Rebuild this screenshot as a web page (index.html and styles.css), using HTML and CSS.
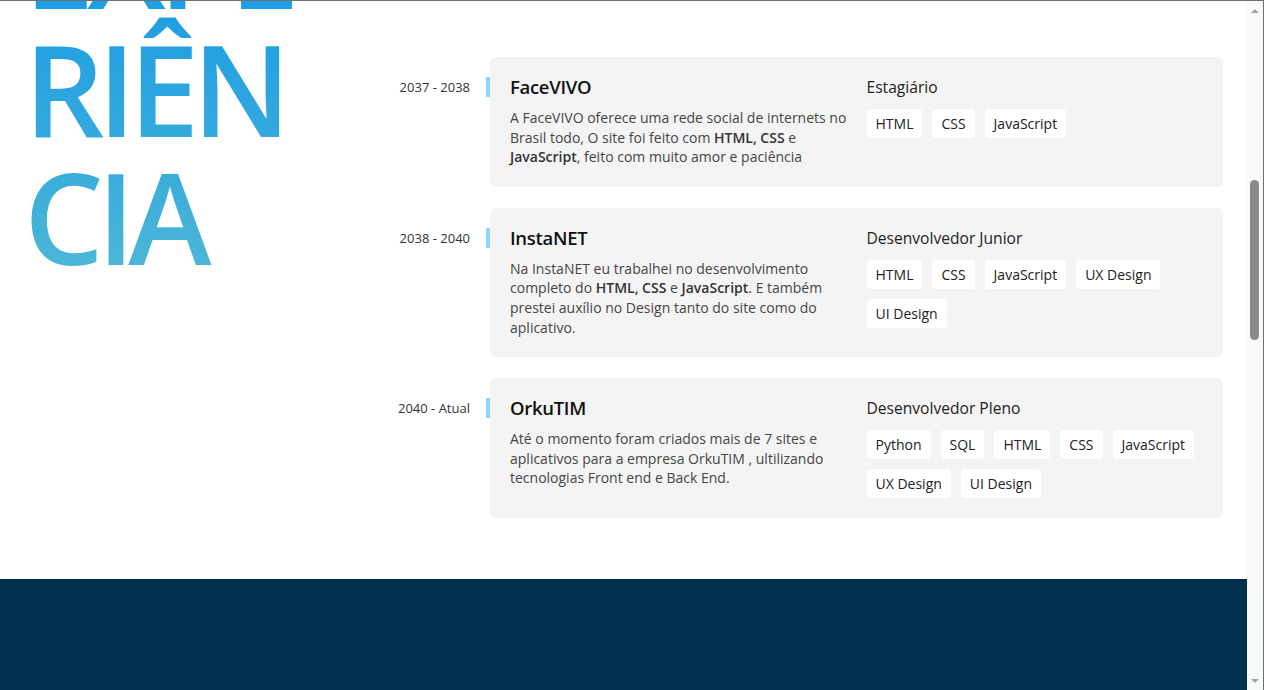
FILE: index.html
```html
<!DOCTYPE html>
<html lang="pt-BR">
<head>
<meta charset="utf-8">
<title>Experiência</title>
<link rel="stylesheet" href="styles.css">
</head>
<body>
<div class="viewport">
  <main class="page">
    <section class="experience">
      <h2 class="exp-title"><span>EXPE</span><span>RIÊN</span><span>CIA</span></h2>
      <div class="timeline">
        <div class="item">
          <div class="date">2037 - 2038</div>
          <div class="card">
            <div class="info">
              <h3 class="company">FaceVIVO</h3>
              <p class="desc">A FaceVIVO oferece uma rede social de internets no Brasil todo, O site foi feito com <b>HTML, CSS</b> e <b>JavaScript</b>, feito com muito amor e paciência</p>
            </div>
            <div class="role-box">
              <div class="role">Estagiário</div>
              <ul class="tags"><li>HTML</li><li>CSS</li><li>JavaScript</li></ul>
            </div>
          </div>
        </div>
        <div class="item">
          <div class="date">2038 - 2040</div>
          <div class="card">
            <div class="info">
              <h3 class="company">InstaNET</h3>
              <p class="desc">Na InstaNET eu trabalhei no desenvolvimento completo do <b>HTML, CSS</b> e <b>JavaScript</b>. E também prestei auxílio no Design tanto do site como do aplicativo.</p>
            </div>
            <div class="role-box">
              <div class="role">Desenvolvedor Junior</div>
              <ul class="tags"><li>HTML</li><li>CSS</li><li>JavaScript</li><li>UX Design</li><li>UI Design</li></ul>
            </div>
          </div>
        </div>
        <div class="item">
          <div class="date">2040 - Atual</div>
          <div class="card">
            <div class="info">
              <h3 class="company">OrkuTIM</h3>
              <p class="desc">Até o momento foram criados mais de 7 sites e aplicativos para a empresa OrkuTIM , ultilizando tecnologias Front end e Back End.</p>
            </div>
            <div class="role-box">
              <div class="role">Desenvolvedor Pleno</div>
              <ul class="tags"><li>Python</li><li>SQL</li><li>HTML</li><li>CSS</li><li>JavaScript</li><li>UX Design</li><li>UI Design</li></ul>
            </div>
          </div>
        </div>
      </div>
    </section>
    <footer class="footer"></footer>
  </main>
  <div class="scrollbar" aria-hidden="true">
    <div class="sb-btn">
      <svg width="16" height="17" viewBox="0 0 16 17"><path d="M4 12 L8 8 L12 12 Z" fill="#a3a3a3"/></svg>
    </div>
    <div class="sb-track"><div class="sb-thumb"></div></div>
    <div class="sb-btn">
      <svg width="16" height="17" viewBox="0 0 16 17"><path d="M4 6 L8 10 L12 6 Z" fill="#a3a3a3"/></svg>
    </div>
  </div>
</div>
</body>
</html>
```
FILE: styles.css
```css
* { box-sizing: border-box; }
html, body { margin: 0; padding: 0; }
body {
  font-family: "Open Sans", "Noto Sans", sans-serif;
  color: #222;
  background: #fff;
  overflow: hidden;
}
.viewport {
  display: flex;
  height: 690px;
  border-top: 1px solid #6f6f6f;
}
.page {
  flex: 1;
  min-width: 0;
  display: flex;
  flex-direction: column;
  overflow: hidden;
}

/* browser scrollbar as seen in the capture */
.scrollbar {
  flex: 0 0 17px;
  display: flex;
  flex-direction: column;
  background: #f9f9f9;
  border-right: 1px solid #6f6f6f;
}
.sb-btn { height: 17px; flex: 0 0 17px; }
.sb-btn svg { display: block; }
.sb-track { flex: 1; padding: 162px 4px 0 3px; }
.sb-thumb {
  height: 160px;
  background: #8a8a8a;
  border-radius: 5px;
}

.experience {
  display: grid;
  grid-template-columns: 366px 1fr;
  padding: 0 24px 61px;
  align-items: start;
}
.exp-title {
  margin: -105px 0 0;
  font-size: 126px;
  line-height: 128px;
  font-weight: 600;
  letter-spacing: -7px;
  background: linear-gradient(180deg, #0a93e8 0%, #4db7d6 100%);
  -webkit-background-clip: text;
  background-clip: text;
  color: transparent;
}
.exp-title span { display: block; }
.timeline {
  padding-top: 56px;
  display: flex;
  flex-direction: column;
  gap: 21px;
}
.item { display: flex; align-items: flex-start; }
.date {
  flex: 0 0 100px;
  margin-top: 20px;
  height: 20px;
  line-height: 20px;
  padding-right: 16px;
  text-align: right;
  font-size: 13px;
  color: #333;
  border-right: 4px solid #8ed4f4;
}
.card {
  flex: 1;
  display: grid;
  grid-template-columns: 1fr 1fr;
  column-gap: 20px;
  padding: 20px;
  background: #f4f4f4;
  border-radius: 6px;
  align-items: start;
}
.company {
  margin: 0;
  font-size: 18.5px;
  line-height: 20px;
  font-weight: 600;
  color: #111;
  letter-spacing: -0.3px;
}
.desc {
  margin: 11px 0 0;
  font-size: 14px;
  line-height: 19.6px;
  color: #454545;
}
.desc b { font-weight: 600; color: #333; }
.role {
  font-size: 15.6px;
  line-height: 20px;
  color: #222;
}
.tags {
  list-style: none;
  margin: 12px 0 0;
  padding: 0;
  display: flex;
  flex-wrap: wrap;
  gap: 10px;
}
.tags li {
  background: #fff;
  border-radius: 4px;
  padding: 5px 9px;
  font-size: 14px;
  line-height: 19px;
  color: #222;
}
.footer {
  flex: 1;
  background: #013050;
}
```
